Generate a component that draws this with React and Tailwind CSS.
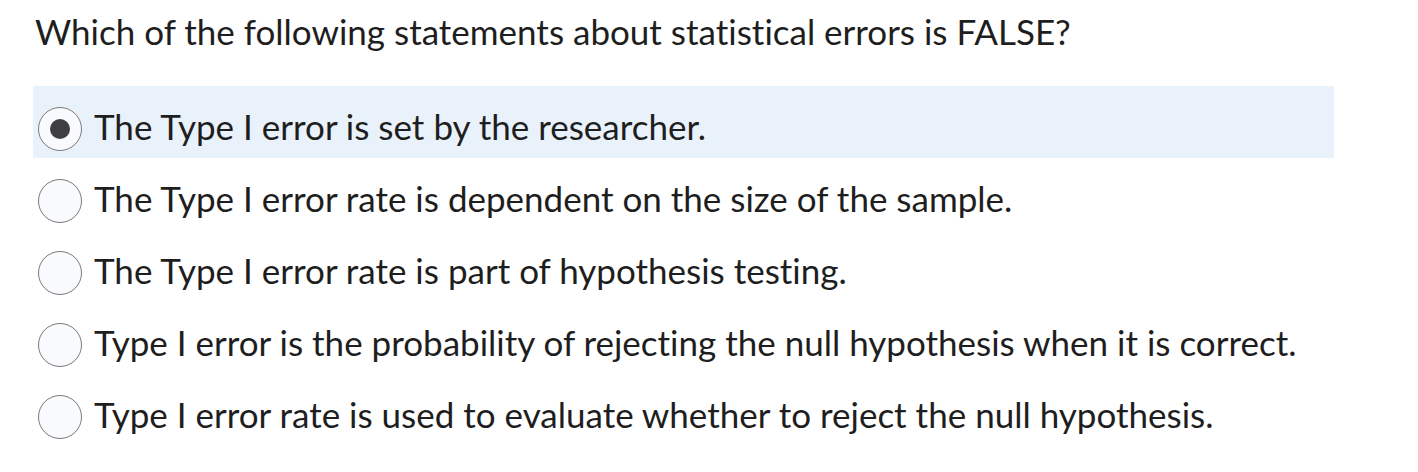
const options = [
  "The Type I error is set by the researcher.",
  "The Type I error rate is dependent on the size of the sample.",
  "The Type I error rate is part of hypothesis testing.",
  "Type I error is the probability of rejecting the null hypothesis when it is correct.",
  "Type I error rate is used to evaluate whether to reject the null hypothesis.",
];

function Radio({ checked }) {
  return (
    <span className="flex h-[44px] w-[44px] shrink-0 items-center justify-center rounded-full border border-[#7a7a7a] bg-[#f9fafd]">
      {checked && <span className="h-[20px] w-[20px] rounded-full bg-[#3f3f42]" />}
    </span>
  );
}

export default function App() {
  return (
    <div className="min-h-[472px] w-[1418px] bg-white pl-[33px] pt-[10px] font-['Lato','Open_Sans',sans-serif] text-[#1e1e1e] [font-variant-ligatures:none]">
      <h1 className="pl-[2px] text-[35px] leading-[42px]">
        Which of the following statements about statistical errors is FALSE?
      </h1>
      <div className="mt-[34px] flex w-[1301px] flex-col">
        {options.map((text, i) => (
          <label
            key={i}
            className={
              "flex h-[72px] items-end pb-[5px] pl-[5px] text-[35px] " +
              (i === 0 ? "bg-[#e9f1fa]" : "")
            }
          >
            <span className="flex items-center gap-[12px]">
              <Radio checked={i === 0} />
              <span className="mb-[6px] leading-[42px]">{text}</span>
            </span>
          </label>
        ))}
      </div>
    </div>
  );
}
